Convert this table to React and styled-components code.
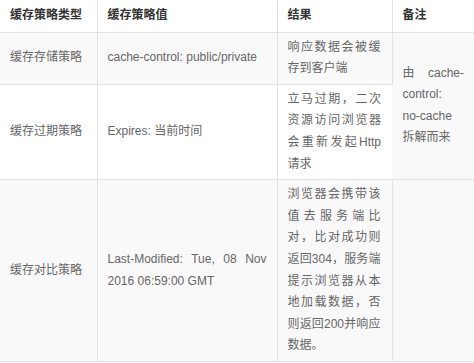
import React from 'react'
import styled, { createGlobalStyle } from 'styled-components'

const GlobalStyle = createGlobalStyle`
  html, body {
    margin: 0;
    padding: 0;
    background: #fff;
  }
  body {
    font-family: "Liberation Sans", Arial, "Noto Sans CJK SC", sans-serif;
  }
`

const Table = styled.table`
  width: 474px;
  table-layout: fixed;
  border-collapse: collapse;
  border-spacing: 0;
  font-size: 12px;
  line-height: 1.8;
  color: #666;
`

const Row = styled.tr`
  background: ${p => (p.$striped ? '#f9f9f9' : '#fff')};
`

const HeadCell = styled.th`
  padding: 5px 10px;
  text-align: left;
  font-weight: bold;
  color: #333;
  border-bottom: 1px solid #e2e2e2;
  border-right: 1px solid #e2e2e2;
  &:last-child {
    border-right: none;
  }
`

const Cell = styled.td`
  padding: 4px 10px;
  vertical-align: middle;
  text-align: justify;
  border-bottom: 1px solid #e2e2e2;
  border-right: 1px solid #e2e2e2;
  background: ${p => (p.$shade ? '#f9f9f9' : 'inherit')};
  &:last-child {
    border-right: none;
  }
`

// result column wraps a touch narrower than the others
const ResultCell = styled(Cell)`
  padding-right: 11px;
`

const NoWrap = styled.span`
  white-space: nowrap;
`

const cols = [97, 180, 115, 82]

export default function App() {
  return (
    <>
      <GlobalStyle />
      <Table>
        <colgroup>
          {cols.map((w, i) => (
            <col key={i} style={{ width: w }} />
          ))}
        </colgroup>
        <thead>
          <Row>
            <HeadCell>缓存策略类型</HeadCell>
            <HeadCell>缓存策略值</HeadCell>
            <HeadCell>结果</HeadCell>
            <HeadCell>备注</HeadCell>
          </Row>
        </thead>
        <tbody>
          <Row $striped>
            <Cell>缓存存储策略</Cell>
            <Cell>cache-control: public/private</Cell>
            <ResultCell>响应数据会被缓存到客户端</ResultCell>
            <Cell rowSpan={2} $shade>
              由 cache-control: <NoWrap>no-cache</NoWrap> 拆解而来
            </Cell>
          </Row>
          <Row>
            <Cell>缓存过期策略</Cell>
            <Cell>Expires: 当前时间</Cell>
            <ResultCell>立马过期，二次资源访问浏览器会重新发起Http请求</ResultCell>
          </Row>
          <Row $striped>
            <Cell>缓存对比策略</Cell>
            <Cell>Last-Modified: Tue, 08 Nov 2016 06:59:00 GMT</Cell>
            <ResultCell>
              浏览器会携带该值去服务端比对，比对成功则返回304，服务端提示浏览器从本地加载数据，否则返回200并响应数据。
            </ResultCell>
            <Cell />
          </Row>
        </tbody>
      </Table>
    </>
  )
}
